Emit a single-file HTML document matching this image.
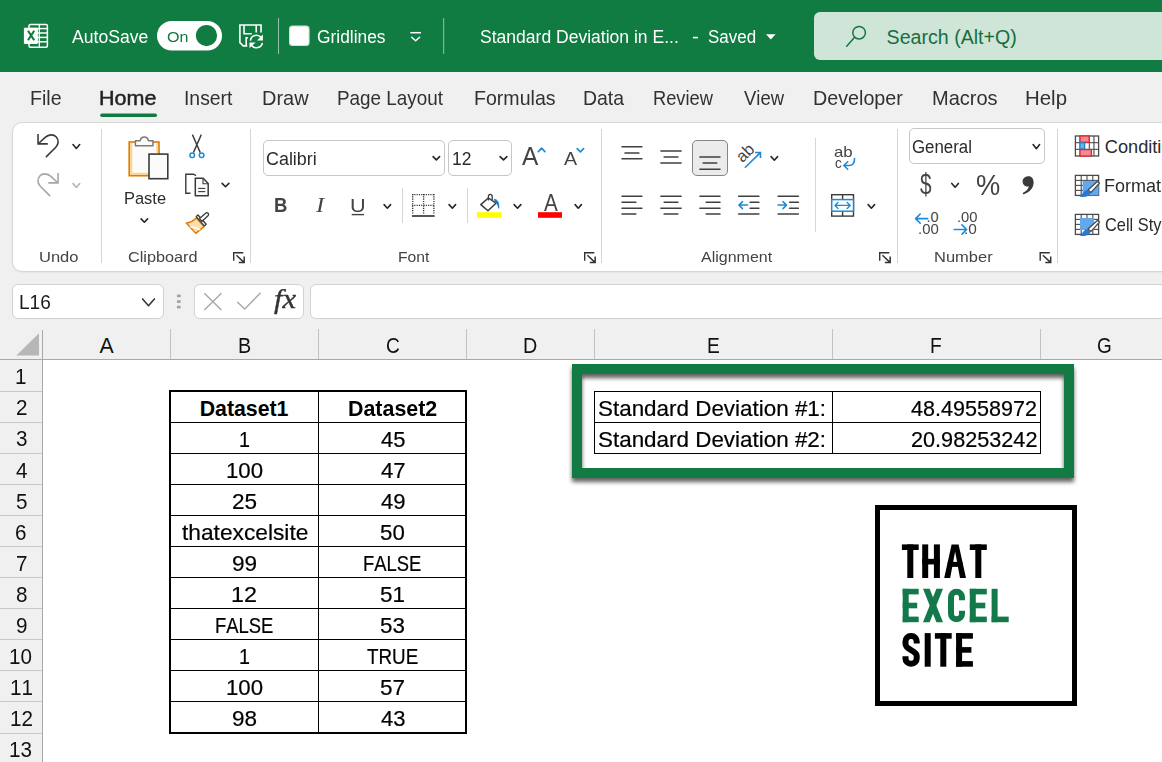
<!DOCTYPE html>
<html><head><meta charset="utf-8"><title>Excel</title>
<style>
html,body{margin:0;padding:0;width:1162px;height:762px;overflow:hidden;background:#f0f0f0;}
#app{position:relative;width:1162px;height:762px;overflow:hidden;background:#f0f0f0;font-family:"Liberation Sans",sans-serif;}
.t{position:absolute;white-space:nowrap;transform-origin:0 0;font-kerning:none;}
.b{position:absolute;box-sizing:border-box;}
svg.ov{position:absolute;left:0;top:0;}

</style></head>
<body>
<div id="app">
<div class=b style='left:0px;top:0px;width:1162px;height:72px;background:#107c41;'></div>
<div class=b style='left:814px;top:12px;width:360px;height:48px;background:#cfe5d8;border-radius:6px;'></div>
<div class=b style='left:12px;top:122px;width:1170px;height:150px;background:#fff;border:1px solid #d6d6d6;border-radius:10px;box-shadow:0 1px 2px rgba(0,0,0,.05);'></div>
<div class=b style='left:101px;top:129px;width:1px;height:134px;background:#d6d6d6;'></div>
<div class=b style='left:250px;top:129px;width:1px;height:134px;background:#d6d6d6;'></div>
<div class=b style='left:601px;top:129px;width:1px;height:134px;background:#d6d6d6;'></div>
<div class=b style='left:897px;top:129px;width:1px;height:134px;background:#d6d6d6;'></div>
<div class=b style='left:1057px;top:129px;width:1px;height:134px;background:#d6d6d6;'></div>
<div class=b style='left:402px;top:188px;width:1px;height:35px;background:#d6d6d6;'></div>
<div class=b style='left:467px;top:188px;width:1px;height:35px;background:#d6d6d6;'></div>
<div class=b style='left:815px;top:138px;width:1px;height:94px;background:#d6d6d6;'></div>
<div class=b style='left:263px;top:140px;width:182px;height:36px;background:#fff;border:1px solid #c6c6c6;border-radius:5px;'></div>
<div class=b style='left:448px;top:140px;width:64px;height:36px;background:#fff;border:1px solid #c6c6c6;border-radius:5px;'></div>
<div class=b style='left:909px;top:128px;width:136px;height:36px;background:#fff;border:1px solid #c6c6c6;border-radius:5px;'></div>
<div class=b style='left:692px;top:140px;width:36px;height:36px;background:#ebebeb;border:1px solid #858585;border-radius:5px;'></div>
<div class=b style='left:12px;top:284px;width:152px;height:35px;background:#fff;border:1px solid #d2d2d2;border-radius:6px;'></div>
<div class=b style='left:194px;top:284px;width:110px;height:35px;background:#fff;border:1px solid #d2d2d2;border-radius:6px;'></div>
<div class=b style='left:310px;top:284px;width:900px;height:35px;background:#fff;border:1px solid #d2d2d2;border-radius:6px;'></div>
<div class=b style='left:43px;top:360px;width:1119px;height:402px;background:#fff;'></div>
<div class=b style='left:0px;top:359px;width:1162px;height:1px;background:#a8a8a8;'></div>
<div class=b style='left:42px;top:330px;width:1px;height:432px;background:#a8a8a8;'></div>
<div class=b style='left:170px;top:329px;width:1px;height:30px;background:#c2c2c2;'></div>
<div class=b style='left:318px;top:329px;width:1px;height:30px;background:#c2c2c2;'></div>
<div class=b style='left:466px;top:329px;width:1px;height:30px;background:#c2c2c2;'></div>
<div class=b style='left:594px;top:329px;width:1px;height:30px;background:#c2c2c2;'></div>
<div class=b style='left:832px;top:329px;width:1px;height:30px;background:#c2c2c2;'></div>
<div class=b style='left:1040px;top:329px;width:1px;height:30px;background:#c2c2c2;'></div>
<div class=b style='left:0px;top:391px;width:42px;height:1px;background:#c8c8c8;'></div>
<div class=b style='left:0px;top:422px;width:42px;height:1px;background:#c8c8c8;'></div>
<div class=b style='left:0px;top:453px;width:42px;height:1px;background:#c8c8c8;'></div>
<div class=b style='left:0px;top:484px;width:42px;height:1px;background:#c8c8c8;'></div>
<div class=b style='left:0px;top:515px;width:42px;height:1px;background:#c8c8c8;'></div>
<div class=b style='left:0px;top:546px;width:42px;height:1px;background:#c8c8c8;'></div>
<div class=b style='left:0px;top:577px;width:42px;height:1px;background:#c8c8c8;'></div>
<div class=b style='left:0px;top:608px;width:42px;height:1px;background:#c8c8c8;'></div>
<div class=b style='left:0px;top:639px;width:42px;height:1px;background:#c8c8c8;'></div>
<div class=b style='left:0px;top:670px;width:42px;height:1px;background:#c8c8c8;'></div>
<div class=b style='left:0px;top:701px;width:42px;height:1px;background:#c8c8c8;'></div>
<div class=b style='left:0px;top:733px;width:42px;height:1px;background:#c8c8c8;'></div>
<div class=b style='left:0px;top:764px;width:42px;height:1px;background:#c8c8c8;'></div>
<div class=b style='left:169px;top:390px;width:298px;height:344px;border:2px solid #000;'></div>
<div class=b style='left:318px;top:391px;width:1px;height:341px;background:#000;'></div>
<div class=b style='left:170px;top:422px;width:296px;height:1px;background:#000;'></div>
<div class=b style='left:170px;top:453px;width:296px;height:1px;background:#000;'></div>
<div class=b style='left:170px;top:484px;width:296px;height:1px;background:#000;'></div>
<div class=b style='left:170px;top:515px;width:296px;height:1px;background:#000;'></div>
<div class=b style='left:170px;top:546px;width:296px;height:1px;background:#000;'></div>
<div class=b style='left:170px;top:577px;width:296px;height:1px;background:#000;'></div>
<div class=b style='left:170px;top:608px;width:296px;height:1px;background:#000;'></div>
<div class=b style='left:170px;top:639px;width:296px;height:1px;background:#000;'></div>
<div class=b style='left:170px;top:670px;width:296px;height:1px;background:#000;'></div>
<div class=b style='left:170px;top:701px;width:296px;height:1px;background:#000;'></div>
<div class=b style='left:594px;top:391px;width:447px;height:63px;border:1px solid #000;'></div>
<div class=b style='left:832px;top:391px;width:1px;height:63px;background:#000;'></div>
<div class=b style='left:594px;top:422px;width:447px;height:1px;background:#000;'></div>
<div class=b style='left:572px;top:364px;width:502px;height:114px;border:10px solid #127a43;filter:drop-shadow(0px 4.3px 2.1px rgba(0,0,0,.62));'></div>
<div class=b style='left:875.3px;top:505.3px;width:201.4px;height:201.2px;border:5.3px solid #000;background:#fff;'></div>
<svg class=ov width='1162' height='762' viewBox='0 0 1162 762'>
<rect x='29' y='24.4' width='18.4' height='22.8' rx='1.5' fill='none' stroke='#fff' stroke-width='1.5'/>
<line x1='29' y1='28.6' x2='47.4' y2='28.6' stroke='#fff' stroke-width='1.5'/>
<line x1='29' y1='33' x2='47.4' y2='33' stroke='#fff' stroke-width='1.5'/>
<line x1='29' y1='37.4' x2='47.4' y2='37.4' stroke='#fff' stroke-width='1.5'/>
<line x1='29' y1='41.8' x2='47.4' y2='41.8' stroke='#fff' stroke-width='1.5'/>
<line x1='39.3' y1='24.4' x2='39.3' y2='47.2' stroke='#fff' stroke-width='1.3'/>
<rect x='23.9' y='27.7' width='14' height='16.2' rx='1' fill='#fff'/>
<path d='M28,30.7 L34.2,40.3 M34.2,30.7 L28,40.3' stroke='#107c41' stroke-width='2.1' fill='none'/>
<rect x='157' y='21' width='65' height='29.6' rx='14.8' fill='#fff'/>
<circle cx='206.5' cy='35.6' r='10.6' fill='#107c41'/>
<path d='M261.05,32.4 V25 H239.9 V42.6 L243.2,45.9 H247.3' fill='none' stroke='#fff' stroke-width='1.6' stroke-linejoin='miter'/>
<path d='M244.05,25 V33.8 H251.8 M256.2,25 V32.4 M248,37.7 H246.2 V45.9' fill='none' stroke='#fff' stroke-width='1.6'/>
<path d='M250.4,40.6 A6.1,6.1 0 0 1 261.2,37.6 M262.4,42.8 A6.1,6.1 0 0 1 251.6,45.4' fill='none' stroke='#fff' stroke-width='1.6'/>
<path d='M262.9,34.4 V40.4 H257 Z M249.5,42.5 H255.6 L249.5,47.9 Z' fill='#fff'/>
<line x1='278.5' y1='18' x2='278.5' y2='54' stroke='rgba(255,255,255,.55)' stroke-width='1' stroke-linecap='butt'/>
<line x1='443.7' y1='18' x2='443.7' y2='54' stroke='rgba(255,255,255,.55)' stroke-width='1' stroke-linecap='butt'/>
<rect x='289.6' y='26.1' width='19.4' height='19.4' rx='3' fill='#fff' stroke='#cfe5d8' stroke-width='1.2'/>
<line x1='410.3' y1='32.7' x2='421' y2='32.7' stroke='#fff' stroke-width='1.5' stroke-linecap='butt'/>
<path d='M411.70000000000005,37.199999999999996 L415.65,40.800000000000004 L419.59999999999997,37.199999999999996' fill='none' stroke='#fff' stroke-width='1.5' stroke-linecap='round' stroke-linejoin='round'/>
<path d='M766,34.3 H775.6 L770.8,39.6 Z' fill='#fff'/>
<circle cx='859.1' cy='32.7' r='6.3' fill='none' stroke='#1a7343' stroke-width='1.5'/>
<line x1='854.6' y1='37.3' x2='846.7' y2='46.2' stroke='#1a7343' stroke-width='1.5' stroke-linecap='round'/>
<rect x='100.2' y='113.6' width='56.8' height='3.4' rx='1.7' fill='#107c41'/>
<path d='M38.05,134.1 V143.85 H47.8' fill='none' stroke='#3b3b3b' stroke-width='1.6'/>
<path d='M38.5,143.5 L45.2,137.4 C48.6,134.2 53.6,134 56.3,137 C58.9,140 58.7,144.3 55.8,147.2 L45.9,157.1' fill='none' stroke='#3b3b3b' stroke-width='1.6' stroke-linecap='butt'/>
<path d='M73.0,144.5 L76.35,148.39999999999998 L79.7,144.5' fill='none' stroke='#262626' stroke-width='1.6' stroke-linecap='round' stroke-linejoin='round'/>
<path d='M58.05,173.1 V182.85 H48.3' fill='none' stroke='#a6a6a6' stroke-width='1.6'/>
<path d='M57.6,182.5 L50.9,176.4 C47.5,173.2 42.5,173 39.8,176 C37.2,179 37.4,183.3 40.3,186.2 L50.2,196.1' fill='none' stroke='#a6a6a6' stroke-width='1.6' stroke-linecap='butt'/>
<path d='M73.0,183.5 L76.35,187.39999999999998 L79.7,183.5' fill='none' stroke='#b4b4b4' stroke-width='1.6' stroke-linecap='round' stroke-linejoin='round'/>
<rect x='129.2' y='142' width='29.8' height='33.7' fill='#fbfbfb' stroke='#e07a00' stroke-width='1.6'/>
<path d='M131.2,143 V173.8 H158' fill='none' stroke='#fbd68a' stroke-width='2.2'/>
<path d='M157.2,143 V153' fill='none' stroke='#fbd68a' stroke-width='1.6'/>
<path d='M135.4,145.8 V140.7 H140.2 A4.2,4.6 0 0 1 148.4,140.7 H153 V145.8 Z' fill='#fbfbfb' stroke='#7a7a7a' stroke-width='1.5' stroke-linejoin='round'/>
<rect x='149' y='154.1' width='18.8' height='24.6' fill='#fbfbfb' stroke='#3b3b3b' stroke-width='1.6'/>
<path d='M141.1,218.9 L144.35,222.2 L147.6,218.9' fill='none' stroke='#262626' stroke-width='1.6' stroke-linecap='round' stroke-linejoin='round'/>
<path d='M192.4,134.6 L200.3,152.6 M201.3,134.6 L193.4,152.6' stroke='#3b3b3b' stroke-width='1.4' fill='none'/>
<circle cx='192.2' cy='155.3' r='2.3' fill='#fff' stroke='#1e8ad6' stroke-width='1.5'/>
<circle cx='201.6' cy='155.3' r='2.3' fill='#fff' stroke='#1e8ad6' stroke-width='1.5'/>
<path d='M190.5,193.2 H185.8 V174.2 H193.6 L196,175.6' fill='none' stroke='#3b3b3b' stroke-width='1.4'/>
<path d='M195.3,178.3 H203.2 L208.2,183.6 V195.8 H195.3 Z' fill='#fbfbfb' stroke='#3b3b3b' stroke-width='1.5' stroke-linejoin='round'/>
<path d='M203,178.5 V183.8 H208' fill='none' stroke='#3b3b3b' stroke-width='1.1'/>
<line x1='198.2' y1='188.4' x2='205.3' y2='188.4' stroke='#3b3b3b' stroke-width='1.1' stroke-linecap='butt'/>
<line x1='198.2' y1='191.6' x2='205.3' y2='191.6' stroke='#3b3b3b' stroke-width='1.1' stroke-linecap='butt'/>
<path d='M222.1,183.4 L225.5,186.7 L228.9,183.4' fill='none' stroke='#262626' stroke-width='1.6' stroke-linecap='round' stroke-linejoin='round'/>
<path d='M186.3,223 C190,222.6 193.6,220.8 196.3,218 L204,226.6 L195.8,233.4 Z' fill='#fbdfb0' stroke='#e07a00' stroke-width='1.4' stroke-linejoin='round'/>
<path d='M190,226.8 C194,226.6 197.5,228 200.2,230' fill='none' stroke='#fff' stroke-width='1.3'/>
<path d='M196.2,216.6 L198,215 L206.2,224.2 L204.3,225.9 Z' fill='#fff' stroke='#3b3b3b' stroke-width='1.3' stroke-linejoin='round'/>
<path d='M199.6,218.6 L205.6,213.2 A1.6,1.6 0 0 1 208,215.8 L202,221.2 Z' fill='#fff' stroke='#3b3b3b' stroke-width='1.3' stroke-linejoin='round'/>
<path d='M233.7,260.8 V252.7 H243.3' fill='none' stroke='#333' stroke-width='1.4'/>
<path d='M236.4,255.2 L244,262.4 M238.8,262.5 H244.2 V256.6' fill='none' stroke='#333' stroke-width='1.5'/>
<path d='M433.1,156.6 L436.35,159.89999999999998 L439.59999999999997,156.6' fill='none' stroke='#262626' stroke-width='1.6' stroke-linecap='round' stroke-linejoin='round'/>
<path d='M500.1,156.6 L503.5,159.89999999999998 L506.9,156.6' fill='none' stroke='#262626' stroke-width='1.6' stroke-linecap='round' stroke-linejoin='round'/>
<path d='M538.3,151.6 L541.6,148.2 L544.9,151.6' fill='none' stroke='#1e8ad6' stroke-width='1.7' stroke-linecap='round' stroke-linejoin='round'/>
<path d='M577.2,148.6 L580.4,152 L583.6,148.6' fill='none' stroke='#1e8ad6' stroke-width='1.7' stroke-linecap='round' stroke-linejoin='round'/>
<line x1='351.7' y1='214.6' x2='364' y2='214.6' stroke='#444' stroke-width='1.4' stroke-linecap='butt'/>
<path d='M384.1,204.6 L387.35,208.2 L390.59999999999997,204.6' fill='none' stroke='#262626' stroke-width='1.6' stroke-linecap='round' stroke-linejoin='round'/>
<line x1='412' y1='194.6' x2='435' y2='194.6' stroke='#2e2e2e' stroke-width='1.3' stroke-dasharray='1.15 1.15'/>
<line x1='412' y1='205.3' x2='435' y2='205.3' stroke='#2e2e2e' stroke-width='1.3' stroke-dasharray='1.15 1.15'/>
<line x1='412.7' y1='194' x2='412.7' y2='214.5' stroke='#2e2e2e' stroke-width='1.3' stroke-dasharray='1.15 1.15'/>
<line x1='423.6' y1='194' x2='423.6' y2='214.5' stroke='#2e2e2e' stroke-width='1.3' stroke-dasharray='1.15 1.15'/>
<line x1='433.9' y1='194' x2='433.9' y2='214.5' stroke='#2e2e2e' stroke-width='1.3' stroke-dasharray='1.15 1.15'/>
<line x1='411.9' y1='216' x2='434.7' y2='216' stroke='#2e2e2e' stroke-width='1.6' stroke-linecap='butt'/>
<path d='M449.1,204.6 L452.35,208.2 L455.59999999999997,204.6' fill='none' stroke='#262626' stroke-width='1.6' stroke-linecap='round' stroke-linejoin='round'/>
<path d='M488.3,198 L480.8,204.6 L488,210.8 L496,203.2 Z' fill='#fff' stroke='#3b3b3b' stroke-width='1.5' stroke-linejoin='round'/>
<path d='M488.4,200.5 V196.6 A1.9,2.2 0 0 1 492.2,196.6 V200' fill='none' stroke='#3b3b3b' stroke-width='1.3'/>
<path d='M494.2,199.2 C497.8,199.6 499.4,203.2 498.7,208.4 C498.2,205.4 497,203.4 495.6,202.6 Z' fill='#1b74c9' stroke='#1b74c9' stroke-width='.8' stroke-linejoin='round'/>
<rect x='477' y='212.2' width='24' height='5.6' fill='#ffff00'/>
<path d='M514.1,204.6 L517.5,208.2 L520.9,204.6' fill='none' stroke='#262626' stroke-width='1.6' stroke-linecap='round' stroke-linejoin='round'/>
<rect x='538' y='212.2' width='24' height='5.6' fill='#ff0000'/>
<path d='M575.1,204.6 L578.25,208.2 L581.4,204.6' fill='none' stroke='#262626' stroke-width='1.6' stroke-linecap='round' stroke-linejoin='round'/>
<path d='M584.7,260.8 V252.7 H594.3' fill='none' stroke='#333' stroke-width='1.4'/>
<path d='M587.4,255.2 L595,262.4 M589.8,262.5 H595.2 V256.6' fill='none' stroke='#333' stroke-width='1.5'/>
<line x1='622.0' y1='146.7' x2='641.9' y2='146.7' stroke='#404040' stroke-width='1.5' stroke-linecap='round'/>
<line x1='625.0' y1='152.9' x2='638.9' y2='152.9' stroke='#404040' stroke-width='1.5' stroke-linecap='round'/>
<line x1='622.0' y1='158.8' x2='641.9' y2='158.8' stroke='#404040' stroke-width='1.5' stroke-linecap='round'/>
<line x1='660.9' y1='151' x2='681.1' y2='151' stroke='#404040' stroke-width='1.5' stroke-linecap='round'/>
<line x1='664.1' y1='157.1' x2='677.9' y2='157.1' stroke='#404040' stroke-width='1.5' stroke-linecap='round'/>
<line x1='660.9' y1='163.1' x2='681.1' y2='163.1' stroke='#404040' stroke-width='1.5' stroke-linecap='round'/>
<line x1='699.9' y1='157.1' x2='720.0' y2='157.1' stroke='#404040' stroke-width='1.5' stroke-linecap='round'/>
<line x1='703.1' y1='163.1' x2='716.8' y2='163.1' stroke='#404040' stroke-width='1.5' stroke-linecap='round'/>
<line x1='699.9' y1='169.2' x2='720.0' y2='169.2' stroke='#404040' stroke-width='1.5' stroke-linecap='round'/>
<line x1='622.0' y1='196.2' x2='641.9' y2='196.2' stroke='#404040' stroke-width='1.5' stroke-linecap='round'/>
<line x1='622.0' y1='202.3' x2='635.9' y2='202.3' stroke='#404040' stroke-width='1.5' stroke-linecap='round'/>
<line x1='622.0' y1='208.3' x2='641.9' y2='208.3' stroke='#404040' stroke-width='1.5' stroke-linecap='round'/>
<line x1='622.0' y1='214.1' x2='635.9' y2='214.1' stroke='#404040' stroke-width='1.5' stroke-linecap='round'/>
<line x1='660.9' y1='196.2' x2='681.1' y2='196.2' stroke='#404040' stroke-width='1.5' stroke-linecap='round'/>
<line x1='664.1' y1='202.3' x2='677.9' y2='202.3' stroke='#404040' stroke-width='1.5' stroke-linecap='round'/>
<line x1='660.9' y1='208.3' x2='681.1' y2='208.3' stroke='#404040' stroke-width='1.5' stroke-linecap='round'/>
<line x1='664.1' y1='214.1' x2='677.9' y2='214.1' stroke='#404040' stroke-width='1.5' stroke-linecap='round'/>
<line x1='699.9' y1='196.2' x2='720.0' y2='196.2' stroke='#404040' stroke-width='1.5' stroke-linecap='round'/>
<line x1='706.1' y1='202.3' x2='720.0' y2='202.3' stroke='#404040' stroke-width='1.5' stroke-linecap='round'/>
<line x1='699.9' y1='208.3' x2='720.0' y2='208.3' stroke='#404040' stroke-width='1.5' stroke-linecap='round'/>
<line x1='706.1' y1='214.1' x2='720.0' y2='214.1' stroke='#404040' stroke-width='1.5' stroke-linecap='round'/>
<line x1='738.6' y1='196.2' x2='758.9' y2='196.2' stroke='#404040' stroke-width='1.5' stroke-linecap='round'/>
<line x1='738.6' y1='214.1' x2='758.9' y2='214.1' stroke='#404040' stroke-width='1.5' stroke-linecap='round'/>
<line x1='750.1' y1='202.3' x2='758.9' y2='202.3' stroke='#404040' stroke-width='1.5' stroke-linecap='round'/>
<line x1='750.1' y1='208.3' x2='758.9' y2='208.3' stroke='#404040' stroke-width='1.5' stroke-linecap='round'/>
<path d='M747.5,205.1 H739 M742.5,201.6 L739,205.1 L742.5,208.6' fill='none' stroke='#1e8ad6' stroke-width='1.5' stroke-linecap='round' stroke-linejoin='round'/>
<line x1='778.1' y1='196.2' x2='798.4' y2='196.2' stroke='#404040' stroke-width='1.5' stroke-linecap='round'/>
<line x1='778.1' y1='214.1' x2='798.4' y2='214.1' stroke='#404040' stroke-width='1.5' stroke-linecap='round'/>
<line x1='789.6' y1='202.3' x2='798.4' y2='202.3' stroke='#404040' stroke-width='1.5' stroke-linecap='round'/>
<line x1='789.6' y1='208.3' x2='798.4' y2='208.3' stroke='#404040' stroke-width='1.5' stroke-linecap='round'/>
<path d='M778,205.1 H786.5 M783,201.6 L786.5,205.1 L783,208.6' fill='none' stroke='#1e8ad6' stroke-width='1.5' stroke-linecap='round' stroke-linejoin='round'/>
<text x='0' y='0' font-family='Liberation Sans, sans-serif' font-size='16.5' fill='#444' transform='translate(742.4,163.3) rotate(-45)'>ab</text>
<path d='M744.9,167.8 L760.3,152.6 M755,152.5 H760.5 V158.1' fill='none' stroke='#1e8ad6' stroke-width='1.6' stroke-linecap='butt' stroke-linejoin='miter'/>
<path d='M771.1,156.6 L774.35,160.2 L777.6,156.6' fill='none' stroke='#262626' stroke-width='1.6' stroke-linecap='round' stroke-linejoin='round'/>
<path d='M854.5,158.6 C854.8,163 852.6,165.5 848.8,165.5 H844.2 M847.7,161.7 L843.8,165.5 L847.7,169.3' fill='none' stroke='#1e8ad6' stroke-width='1.6' stroke-linecap='round' stroke-linejoin='round'/>
<rect x='831.7' y='194.7' width='21.8' height='21.4' fill='none' stroke='#3b3b3b' stroke-width='1.4'/>
<line x1='842.6' y1='194.7' x2='842.6' y2='199.6' stroke='#3b3b3b' stroke-width='1.4' stroke-linecap='butt'/>
<line x1='842.6' y1='211.2' x2='842.6' y2='216.1' stroke='#3b3b3b' stroke-width='1.4' stroke-linecap='butt'/>
<rect x='831.7' y='199.6' width='21.8' height='11.6' fill='#fff' stroke='#1e8ad6' stroke-width='1.5'/>
<path d='M835,205.4 H850.2 M838,202.4 L835,205.4 L838,208.4 M847.2,202.4 L850.2,205.4 L847.2,208.4' fill='none' stroke='#1e8ad6' stroke-width='1.4' stroke-linecap='round' stroke-linejoin='round'/>
<path d='M868.1,204.6 L871.35,208.2 L874.6,204.6' fill='none' stroke='#262626' stroke-width='1.6' stroke-linecap='round' stroke-linejoin='round'/>
<path d='M879.7,260.8 V252.7 H889.3' fill='none' stroke='#333' stroke-width='1.4'/>
<path d='M882.4,255.2 L890,262.4 M884.8,262.5 H890.2 V256.6' fill='none' stroke='#333' stroke-width='1.5'/>
<path d='M1033.1,144.6 L1036.35,148.7 L1039.6000000000001,144.6' fill='none' stroke='#262626' stroke-width='1.6' stroke-linecap='round' stroke-linejoin='round'/>
<path d='M951.8000000000001,183.4 L955.1,187.2 L958.4,183.4' fill='none' stroke='#262626' stroke-width='1.6' stroke-linecap='round' stroke-linejoin='round'/>
<path d='M1028.6,176.3 C1031.9,176.3 1033.6,179 1033.6,182.4 C1033.6,188 1029.6,192.3 1023.3,194.4 L1022.7,193 C1026.3,191.3 1028.6,188.8 1028.9,186.3 C1028.5,186.4 1028.1,186.5 1027.6,186.5 C1024.6,186.5 1022.6,184.3 1022.6,181.5 C1022.6,178.5 1025.2,176.3 1028.6,176.3 Z' fill='#3a3a3a'/>
<path d='M927.8,218.6 H915.8 M920.2,214 L915.6,218.6 L920.2,223.2' fill='none' stroke='#1e8ad6' stroke-width='1.6' stroke-linecap='round' stroke-linejoin='round'/>
<path d='M954.2,229.5 H966.4 M962,224.9 L966.6,229.5 L962,234.1' fill='none' stroke='#1e8ad6' stroke-width='1.6' stroke-linecap='round' stroke-linejoin='round'/>
<path d='M1040.2,260.8 V252.7 H1049.8' fill='none' stroke='#333' stroke-width='1.4'/>
<path d='M1042.9,255.2 L1050.5,262.4 M1045.3,262.5 H1050.7 V256.6' fill='none' stroke='#333' stroke-width='1.5'/>
<rect x='1075.4' y='136' width='23.2' height='20' fill='#fff' stroke='#4a4a4a' stroke-width='1.3'/>
<line x1='1075.4' y1='142.66666666666666' x2='1098.6000000000001' y2='142.66666666666666' stroke='#4a4a4a' stroke-width='1.1' stroke-linecap='butt'/>
<line x1='1075.4' y1='149.33333333333334' x2='1098.6000000000001' y2='149.33333333333334' stroke='#4a4a4a' stroke-width='1.1' stroke-linecap='butt'/>
<line x1='1080.0400000000002' y1='136' x2='1080.0400000000002' y2='156' stroke='#4a4a4a' stroke-width='1.1' stroke-linecap='butt'/>
<line x1='1084.68' y1='136' x2='1084.68' y2='156' stroke='#4a4a4a' stroke-width='1.1' stroke-linecap='butt'/>
<line x1='1089.3200000000002' y1='136' x2='1089.3200000000002' y2='156' stroke='#4a4a4a' stroke-width='1.1' stroke-linecap='butt'/>
<line x1='1093.96' y1='136' x2='1093.96' y2='156' stroke='#4a4a4a' stroke-width='1.1' stroke-linecap='butt'/>
<rect x='1080' y='136' width='9.2' height='6.2' fill='#f58a93' stroke='#e5252c' stroke-width='1.3'/>
<rect x='1080' y='142.8' width='4.4' height='6.2' fill='#6fb0ee' stroke='#1b7fd6' stroke-width='1.1'/>
<rect x='1080' y='149.6' width='11.4' height='6.4' fill='#f58a93' stroke='#e5252c' stroke-width='1.3'/>
<rect x='1075.4' y='175.4' width='23.2' height='20' fill='#fff' stroke='#4a4a4a' stroke-width='1.3'/>
<line x1='1075.4' y1='180.4' x2='1098.6000000000001' y2='180.4' stroke='#4a4a4a' stroke-width='1.1' stroke-linecap='butt'/>
<line x1='1075.4' y1='185.4' x2='1098.6000000000001' y2='185.4' stroke='#4a4a4a' stroke-width='1.1' stroke-linecap='butt'/>
<line x1='1075.4' y1='190.4' x2='1098.6000000000001' y2='190.4' stroke='#4a4a4a' stroke-width='1.1' stroke-linecap='butt'/>
<line x1='1081.2' y1='175.4' x2='1081.2' y2='195.4' stroke='#4a4a4a' stroke-width='1.1' stroke-linecap='butt'/>
<line x1='1087.0' y1='175.4' x2='1087.0' y2='195.4' stroke='#4a4a4a' stroke-width='1.1' stroke-linecap='butt'/>
<line x1='1092.8000000000002' y1='175.4' x2='1092.8000000000002' y2='195.4' stroke='#4a4a4a' stroke-width='1.1' stroke-linecap='butt'/>
<rect x='1082.6' y='180.8' width='16' height='14.6' fill='#62a8ea'/>
<path d='M1097.6000000000001,181.2 L1099.4,183.2 L1090.8000000000002,192.6 L1088.0,190.0 Z' fill='#fff' stroke='#4a4a4a' stroke-width='1.3' stroke-linejoin='round'/>
<path d='M1079.4,196.2 C1082.4,195.39999999999998 1082.8000000000002,191.79999999999998 1086.0,190.2 C1088.8000000000002,189.39999999999998 1091.2,192.0 1089.8000000000002,194.6 C1088.0,197.2 1083.0,197.79999999999998 1079.4,196.2 Z' fill='#2a78d2'/>
<rect x='1075.4' y='214.4' width='23.2' height='20' fill='#fff' stroke='#4a4a4a' stroke-width='1.3'/>
<line x1='1075.4' y1='219.4' x2='1098.6000000000001' y2='219.4' stroke='#4a4a4a' stroke-width='1.1' stroke-linecap='butt'/>
<line x1='1075.4' y1='224.4' x2='1098.6000000000001' y2='224.4' stroke='#4a4a4a' stroke-width='1.1' stroke-linecap='butt'/>
<line x1='1075.4' y1='229.4' x2='1098.6000000000001' y2='229.4' stroke='#4a4a4a' stroke-width='1.1' stroke-linecap='butt'/>
<line x1='1081.2' y1='214.4' x2='1081.2' y2='234.4' stroke='#4a4a4a' stroke-width='1.1' stroke-linecap='butt'/>
<line x1='1087.0' y1='214.4' x2='1087.0' y2='234.4' stroke='#4a4a4a' stroke-width='1.1' stroke-linecap='butt'/>
<line x1='1092.8000000000002' y1='214.4' x2='1092.8000000000002' y2='234.4' stroke='#4a4a4a' stroke-width='1.1' stroke-linecap='butt'/>
<rect x='1080' y='218' width='14.2' height='12' fill='#62a8ea'/>
<path d='M1097.6000000000001,220.2 L1099.4,222.2 L1090.8000000000002,231.6 L1088.0,229.0 Z' fill='#fff' stroke='#4a4a4a' stroke-width='1.3' stroke-linejoin='round'/>
<path d='M1079.4,235.2 C1082.4,234.39999999999998 1082.8000000000002,230.79999999999998 1086.0,229.2 C1088.8000000000002,228.39999999999998 1091.2,231.0 1089.8000000000002,233.6 C1088.0,236.2 1083.0,236.79999999999998 1079.4,235.2 Z' fill='#2a78d2'/>
<path d='M142.6,298.9 L148.5,305.7 L154.4,298.9' fill='none' stroke='#333' stroke-width='1.5' stroke-linecap='round' stroke-linejoin='round'/>
<rect x='177' y='294.59999999999997' width='3.6' height='2.6' fill='#a0a0a0'/>
<rect x='177' y='300.3' width='3.6' height='2.6' fill='#a0a0a0'/>
<rect x='177' y='305.8' width='3.6' height='2.6' fill='#a0a0a0'/>
<path d='M204.3,293.2 L221.4,309.9 M221.4,293.2 L204.3,309.9' stroke='#a8a8a8' stroke-width='1.4' fill='none'/>
<path d='M237.3,302 L244.8,309 L260.5,292.8' stroke='#a8a8a8' stroke-width='1.4' fill='none'/>
<path d='M39,333.2 V355.6 H16.3 Z' fill='#b7b7b7'/>
<rect x='901.90' y='544.40' width='16.80' height='5.60' fill='#000'/>
<rect x='907.30' y='544.40' width='6.00' height='33.60' fill='#000'/>
<rect x='922.20' y='544.40' width='6.00' height='33.60' fill='#000'/>
<rect x='933.90' y='544.40' width='6.00' height='33.60' fill='#000'/>
<rect x='922.20' y='558.85' width='17.70' height='5.60' fill='#000'/>
<path d='M944.2,578.0 L951.6,544.4 H958.6 L966.0,578.0 H960.0 L955.1,551.4 L950.2,578.0 Z' fill='#000'/>
<rect x='947.80' y='561.87' width='14.60' height='5.00' fill='#000'/>
<rect x='969.80' y='544.40' width='17.00' height='5.60' fill='#000'/>
<rect x='975.30' y='544.40' width='6.00' height='33.60' fill='#000'/>
<rect x='902.70' y='588.80' width='6.00' height='33.40' fill='#13794a'/>
<rect x='902.70' y='588.80' width='16.00' height='5.60' fill='#13794a'/>
<rect x='902.70' y='616.60' width='16.00' height='5.60' fill='#13794a'/>
<rect x='902.70' y='602.70' width='14.50' height='5.60' fill='#13794a'/>
<path d='M923,588.8 H929.6 L943,622.1999999999999 H936.4 Z' fill='#13794a'/>
<path d='M943,588.8 H936.4 L923,622.1999999999999 H929.6 Z' fill='#13794a'/>
<path d='M962.0,600.3 V597.3 A5.5,5.5 0 0 0 956.5,591.8 H956.5 A5.5,5.5 0 0 0 951.0,597.3 V613.6999999999999 A5.5,5.5 0 0 0 956.5,619.1999999999999 H956.5 A5.5,5.5 0 0 0 962.0,613.6999999999999 V610.6999999999999' fill='none' stroke='#13794a' stroke-width='6.0'/>
<rect x='969.80' y='588.80' width='6.00' height='33.40' fill='#13794a'/>
<rect x='969.80' y='588.80' width='17.00' height='5.60' fill='#13794a'/>
<rect x='969.80' y='616.60' width='17.00' height='5.60' fill='#13794a'/>
<rect x='969.80' y='602.70' width='15.50' height='5.60' fill='#13794a'/>
<rect x='991.60' y='588.80' width='6.00' height='33.40' fill='#13794a'/>
<rect x='991.60' y='616.60' width='17.10' height='5.60' fill='#13794a'/>
<path d='M916.7,643.6 V641.4 A5.3,5.3 0 0 0 911.4000000000001,636.1 H910.8 A5.3,5.3 0 0 0 905.5,641.4 V644.1 C905.5,650.1 916.7,650.1 916.7,656.1 V658.4000000000001 A5.3,5.3 0 0 1 911.4000000000001,663.7 H910.8 A5.3,5.3 0 0 1 905.5,658.4000000000001 V656.2' fill='none' stroke='#000' stroke-width='6.0'/>
<rect x='924.70' y='633.10' width='6.00' height='33.60' fill='#000'/>
<rect x='934.90' y='633.10' width='16.80' height='5.60' fill='#000'/>
<rect x='940.30' y='633.10' width='6.00' height='33.60' fill='#000'/>
<rect x='956.10' y='633.10' width='6.00' height='33.60' fill='#000'/>
<rect x='956.10' y='633.10' width='16.80' height='5.60' fill='#000'/>
<rect x='956.10' y='661.10' width='16.80' height='5.60' fill='#000'/>
<rect x='956.10' y='647.10' width='15.30' height='5.60' fill='#000'/>
</svg>
<span class=t style='left:72.47px;top:28.00px;font-size:18.9px;line-height:18.9px;color:#ffffff;transform:scaleX(0.9312);'>AutoSave</span>
<span class=t style='left:166.54px;top:29.00px;font-size:15.2px;line-height:15.2px;color:#107c41;transform:scaleX(1.0555);'>On</span>
<span class=t style='left:316.63px;top:28.00px;font-size:18.9px;line-height:18.9px;color:#ffffff;transform:scaleX(0.9185);'>Gridlines</span>
<span class=t style='left:479.70px;top:28.00px;font-size:18.9px;line-height:18.9px;color:#ffffff;transform:scaleX(0.9280);'>Standard Deviation in E...</span>
<span class=t style='left:692.09px;top:28.00px;font-size:18.9px;line-height:18.9px;color:#ffffff;transform:scaleX(1.0836);'>-</span>
<span class=t style='left:707.93px;top:28.00px;font-size:18.9px;line-height:18.9px;color:#ffffff;transform:scaleX(0.8988);'>Saved</span>
<span class=t style='left:886.61px;top:28.00px;font-size:19.6px;line-height:19.6px;color:#176e40;'>Search (Alt+Q)</span>
<span class=t style='left:30.29px;top:89.00px;font-size:19.8px;line-height:19.8px;color:#323130;transform:scaleX(0.9898);'>File</span>
<span class=t style='left:184.11px;top:89.00px;font-size:19.8px;line-height:19.8px;color:#323130;transform:scaleX(0.9780);'>Insert</span>
<span class=t style='left:261.86px;top:89.00px;font-size:19.8px;line-height:19.8px;color:#323130;transform:scaleX(1.0084);'>Draw</span>
<span class=t style='left:337.15px;top:89.00px;font-size:19.8px;line-height:19.8px;color:#323130;transform:scaleX(0.9532);'>Page Layout</span>
<span class=t style='left:474.09px;top:89.00px;font-size:19.8px;line-height:19.8px;color:#323130;transform:scaleX(0.9891);'>Formulas</span>
<span class=t style='left:583.40px;top:89.00px;font-size:19.8px;line-height:19.8px;color:#323130;transform:scaleX(0.9826);'>Data</span>
<span class=t style='left:653.00px;top:89.00px;font-size:19.8px;line-height:19.8px;color:#323130;transform:scaleX(0.9235);'>Review</span>
<span class=t style='left:743.62px;top:89.00px;font-size:19.8px;line-height:19.8px;color:#323130;transform:scaleX(0.9329);'>View</span>
<span class=t style='left:813.38px;top:89.00px;font-size:19.8px;line-height:19.8px;color:#323130;transform:scaleX(0.9966);'>Developer</span>
<span class=t style='left:932.06px;top:89.00px;font-size:19.8px;line-height:19.8px;color:#323130;transform:scaleX(1.0116);'>Macros</span>
<span class=t style='left:1025.32px;top:89.00px;font-size:19.8px;line-height:19.8px;color:#323130;transform:scaleX(1.0323);'>Help</span>
<span class=t style='left:99.03px;top:89.00px;font-size:19.8px;line-height:19.8px;color:#222;-webkit-text-stroke:0.45px #222;transform:scaleX(1.0892);'>Home</span>
<span class=t style='left:39.23px;top:249.00px;font-size:15.3px;line-height:15.3px;color:#444444;transform:scaleX(1.0790);'>Undo</span>
<span class=t style='left:128.17px;top:249.00px;font-size:15.3px;line-height:15.3px;color:#444444;transform:scaleX(1.0624);'>Clipboard</span>
<span class=t style='left:397.71px;top:249.00px;font-size:15.3px;line-height:15.3px;color:#444444;transform:scaleX(1.0257);'>Font</span>
<span class=t style='left:700.97px;top:249.00px;font-size:15.3px;line-height:15.3px;color:#444444;transform:scaleX(1.0458);'>Alignment</span>
<span class=t style='left:934.35px;top:249.00px;font-size:15.3px;line-height:15.3px;color:#444444;transform:scaleX(1.0774);'>Number</span>
<span class=t style='left:123.65px;top:190.00px;font-size:17.4px;line-height:17.4px;color:#2b2b2b;transform:scaleX(0.9458);'>Paste</span>
<span class=t style='left:265.89px;top:150.00px;font-size:18px;line-height:18px;color:#2b2b2b;transform:scaleX(0.9942);'>Calibri</span>
<span class=t style='left:451.87px;top:150.00px;font-size:18px;line-height:18px;color:#2b2b2b;transform:scaleX(0.9693);'>12</span>
<span class=t style='left:911.85px;top:138.00px;font-size:18px;line-height:18px;color:#2b2b2b;transform:scaleX(0.9366);'>General</span>
<span class=t style='left:1104.78px;top:138.00px;font-size:18.2px;line-height:18.2px;color:#2b2b2b;'>Conditional</span>
<span class=t style='left:1104.22px;top:177.00px;font-size:18.2px;line-height:18.2px;color:#2b2b2b;transform:scaleX(0.9900);'>Format as</span>
<span class=t style='left:1104.87px;top:216.00px;font-size:18.2px;line-height:18.2px;color:#2b2b2b;transform:scaleX(0.9000);'>Cell Styles</span>
<span class=t style='left:274.46px;top:195.00px;font-size:20px;line-height:20px;color:#444;font-weight:700;transform:scaleX(0.9264);'>B</span>
<span class=t style='left:315.80px;top:195.00px;font-size:21px;line-height:21px;color:#444;font-family:"Liberation Serif", serif;font-style:italic;transform:scaleX(1.1779);'>I</span>
<span class=t style='left:350.03px;top:196.00px;font-size:19px;line-height:19px;color:#444;transform:scaleX(1.1400);'>U</span>
<span class=t style='left:522.45px;top:144.00px;font-size:25.4px;line-height:25.4px;color:#444;transform:scaleX(0.9619);'>A</span>
<span class=t style='left:563.96px;top:150.00px;font-size:18.8px;line-height:18.8px;color:#444;transform:scaleX(1.0428);'>A</span>
<span class=t style='left:543.56px;top:191.00px;font-size:24px;line-height:24px;color:#444;transform:scaleX(0.8609);'>A</span>
<span class=t style='left:920.28px;top:169.00px;font-size:30px;line-height:30px;color:#444;transform:scaleX(0.6927);'>$</span>
<span class=t style='left:975.93px;top:170.00px;font-size:30px;line-height:30px;color:#444;transform:scaleX(0.9089);'>%</span>
<span class=t style='left:926.38px;top:210.00px;font-size:14.5px;line-height:14.5px;color:#444;'>.0</span>
<span class=t style='left:917.74px;top:222.00px;font-size:14.5px;line-height:14.5px;color:#444;transform:scaleX(1.0292);'>.00</span>
<span class=t style='left:956.65px;top:210.00px;font-size:14.5px;line-height:14.5px;color:#444;transform:scaleX(1.0183);'>.00</span>
<span class=t style='left:964.40px;top:222.00px;font-size:14.5px;line-height:14.5px;color:#444;transform:scaleX(1.0586);'>.0</span>
<span class=t style='left:833.98px;top:144.00px;font-size:15px;line-height:15px;color:#444;transform:scaleX(1.1221);'>ab</span>
<span class=t style='left:834.72px;top:155.00px;font-size:15px;line-height:15px;color:#444;transform:scaleX(0.9123);'>c</span>
<span class=t style='left:19.04px;top:293.00px;font-size:19.9px;line-height:19.9px;color:#1a1a1a;transform:scaleX(0.9578);'>L16</span>
<span class=t style='left:274.26px;top:286.00px;font-size:27px;line-height:27px;color:#333;font-family:"Liberation Serif", serif;font-style:italic;-webkit-text-stroke:0.35px #333;transform:scaleX(1.1325);'>fx</span>
<span class=t style='left:99.40px;top:336.00px;font-size:21.3px;line-height:21.3px;color:#111111;'>A</span>
<span class=t style='left:237.70px;top:336.00px;font-size:21.3px;line-height:21.3px;color:#111111;transform:scaleX(0.9300);'>B</span>
<span class=t style='left:385.66px;top:336.00px;font-size:21.3px;line-height:21.3px;color:#111111;transform:scaleX(0.9000);'>C</span>
<span class=t style='left:523.11px;top:336.00px;font-size:21.3px;line-height:21.3px;color:#111111;transform:scaleX(0.9300);'>D</span>
<span class=t style='left:706.83px;top:336.00px;font-size:21.3px;line-height:21.3px;color:#111111;transform:scaleX(0.9000);'>E</span>
<span class=t style='left:930.44px;top:336.00px;font-size:21.3px;line-height:21.3px;color:#111111;transform:scaleX(0.9000);'>F</span>
<span class=t style='left:1096.86px;top:336.00px;font-size:21.3px;line-height:21.3px;color:#111111;transform:scaleX(0.8900);'>G</span>
<span class=t style='left:15.27px;top:367.00px;font-size:21.3px;line-height:21.3px;color:#111111;transform:scaleX(0.9700);'>1</span>
<span class=t style='left:15.55px;top:398.00px;font-size:21.3px;line-height:21.3px;color:#111111;transform:scaleX(0.9700);'>2</span>
<span class=t style='left:15.62px;top:429.00px;font-size:21.3px;line-height:21.3px;color:#111111;transform:scaleX(0.9700);'>3</span>
<span class=t style='left:15.62px;top:461.00px;font-size:21.3px;line-height:21.3px;color:#111111;transform:scaleX(0.9700);'>4</span>
<span class=t style='left:15.57px;top:492.00px;font-size:21.3px;line-height:21.3px;color:#111111;transform:scaleX(0.9700);'>5</span>
<span class=t style='left:15.48px;top:523.00px;font-size:21.3px;line-height:21.3px;color:#111111;transform:scaleX(0.9700);'>6</span>
<span class=t style='left:15.54px;top:554.00px;font-size:21.3px;line-height:21.3px;color:#111111;transform:scaleX(0.9700);'>7</span>
<span class=t style='left:15.55px;top:585.00px;font-size:21.3px;line-height:21.3px;color:#111111;transform:scaleX(0.9700);'>8</span>
<span class=t style='left:15.56px;top:616.00px;font-size:21.3px;line-height:21.3px;color:#111111;transform:scaleX(0.9700);'>9</span>
<span class=t style='left:9.43px;top:647.00px;font-size:21.3px;line-height:21.3px;color:#111111;transform:scaleX(0.9700);'>10</span>
<span class=t style='left:9.53px;top:678.00px;font-size:21.3px;line-height:21.3px;color:#111111;transform:scaleX(0.9700);'>11</span>
<span class=t style='left:9.54px;top:709.00px;font-size:21.3px;line-height:21.3px;color:#111111;transform:scaleX(0.9700);'>12</span>
<span class=t style='left:9.48px;top:740.00px;font-size:21.3px;line-height:21.3px;color:#111111;transform:scaleX(0.9700);'>13</span>
<span class=t style='left:199.67px;top:399.00px;font-size:21.3px;line-height:21.3px;color:#000;font-weight:700;'>Dataset1</span>
<span class=t style='left:347.77px;top:399.00px;font-size:21.3px;line-height:21.3px;color:#000;font-weight:700;transform:scaleX(1.0055);'>Dataset2</span>
<span class=t style='left:238.85px;top:430.00px;font-size:21.3px;line-height:21.3px;color:#000;-webkit-text-stroke:0.2px #000;transform:scaleX(0.9256);'>1</span>
<span class=t style='left:380.70px;top:430.00px;font-size:21.3px;line-height:21.3px;color:#000;-webkit-text-stroke:0.2px #000;transform:scaleX(1.0310);'>45</span>
<span class=t style='left:225.66px;top:461.00px;font-size:21.3px;line-height:21.3px;color:#000;-webkit-text-stroke:0.2px #000;transform:scaleX(1.0428);'>100</span>
<span class=t style='left:380.69px;top:461.00px;font-size:21.3px;line-height:21.3px;color:#000;-webkit-text-stroke:0.2px #000;transform:scaleX(1.0392);'>47</span>
<span class=t style='left:231.97px;top:492.00px;font-size:21.3px;line-height:21.3px;color:#000;-webkit-text-stroke:0.2px #000;transform:scaleX(1.0586);'>25</span>
<span class=t style='left:380.69px;top:492.00px;font-size:21.3px;line-height:21.3px;color:#000;-webkit-text-stroke:0.2px #000;transform:scaleX(1.0363);'>49</span>
<span class=t style='left:181.76px;top:523.00px;font-size:21.3px;line-height:21.3px;color:#000;-webkit-text-stroke:0.2px #000;transform:scaleX(1.0672);'>thatexcelsite</span>
<span class=t style='left:380.31px;top:523.00px;font-size:21.3px;line-height:21.3px;color:#000;-webkit-text-stroke:0.2px #000;transform:scaleX(1.0451);'>50</span>
<span class=t style='left:232.04px;top:554.00px;font-size:21.3px;line-height:21.3px;color:#000;-webkit-text-stroke:0.2px #000;transform:scaleX(1.0607);'>99</span>
<span class=t style='left:363.19px;top:554.00px;font-size:21.3px;line-height:21.3px;color:#000;-webkit-text-stroke:0.2px #000;transform:scaleX(0.8640);'>FALSE</span>
<span class=t style='left:231.32px;top:585.00px;font-size:21.3px;line-height:21.3px;color:#000;-webkit-text-stroke:0.2px #000;transform:scaleX(1.0953);'>12</span>
<span class=t style='left:380.30px;top:585.00px;font-size:21.3px;line-height:21.3px;color:#000;-webkit-text-stroke:0.2px #000;transform:scaleX(1.0551);'>51</span>
<span class=t style='left:215.09px;top:616.00px;font-size:21.3px;line-height:21.3px;color:#000;-webkit-text-stroke:0.2px #000;transform:scaleX(0.8640);'>FALSE</span>
<span class=t style='left:380.30px;top:616.00px;font-size:21.3px;line-height:21.3px;color:#000;-webkit-text-stroke:0.2px #000;transform:scaleX(1.0501);'>53</span>
<span class=t style='left:238.85px;top:647.00px;font-size:21.3px;line-height:21.3px;color:#000;-webkit-text-stroke:0.2px #000;transform:scaleX(0.9256);'>1</span>
<span class=t style='left:367.28px;top:647.00px;font-size:21.3px;line-height:21.3px;color:#000;-webkit-text-stroke:0.2px #000;transform:scaleX(0.8836);'>TRUE</span>
<span class=t style='left:225.66px;top:678.00px;font-size:21.3px;line-height:21.3px;color:#000;-webkit-text-stroke:0.2px #000;transform:scaleX(1.0428);'>100</span>
<span class=t style='left:380.30px;top:678.00px;font-size:21.3px;line-height:21.3px;color:#000;-webkit-text-stroke:0.2px #000;transform:scaleX(1.0566);'>57</span>
<span class=t style='left:232.05px;top:709.00px;font-size:21.3px;line-height:21.3px;color:#000;-webkit-text-stroke:0.2px #000;transform:scaleX(1.0566);'>98</span>
<span class=t style='left:380.70px;top:709.00px;font-size:21.3px;line-height:21.3px;color:#000;-webkit-text-stroke:0.2px #000;transform:scaleX(1.0329);'>43</span>
<span class=t style='left:597.68px;top:399.00px;font-size:21.3px;line-height:21.3px;color:#000;-webkit-text-stroke:0.2px #000;transform:scaleX(1.0525);'>Standard Deviation #1:</span>
<span class=t style='left:597.68px;top:430.00px;font-size:21.3px;line-height:21.3px;color:#000;-webkit-text-stroke:0.2px #000;transform:scaleX(1.0525);'>Standard Deviation #2:</span>
<span class=t style='left:911.21px;top:399.00px;font-size:21.3px;line-height:21.3px;color:#000;-webkit-text-stroke:0.2px #000;transform:scaleX(1.0121);'>48.49558972</span>
<span class=t style='left:910.61px;top:430.00px;font-size:21.3px;line-height:21.3px;color:#000;-webkit-text-stroke:0.2px #000;transform:scaleX(1.0169);'>20.98253242</span>
</div>
</body></html>
